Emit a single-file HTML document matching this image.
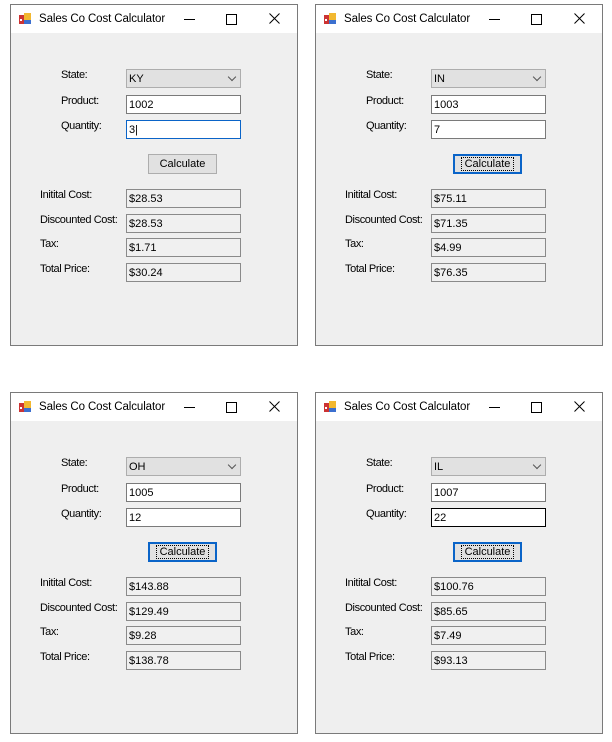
<!DOCTYPE html>
<html><head><style>
body{margin:0;width:612px;height:742px;background:#fff;position:relative;font-family:"Liberation Sans",Arial,sans-serif;overflow:hidden}
.w{position:absolute;width:286px;height:340px;border:1px solid #7a7a7a;background:#efefef}
.tb{position:absolute;left:0;top:0;width:286px;height:28px;background:#fff}
.tt{position:absolute;left:28px;top:8px;font-size:11.5px;color:#000;letter-spacing:-0.1px}
.ic{position:absolute;left:8px;top:8px;width:12px;height:12px}
.mn{position:absolute;left:173px;top:14px;width:11px;height:1px;background:#000}
.mx{position:absolute;left:215px;top:9px;width:9px;height:9px;border:1px solid #000}
.cl{position:absolute;left:258px;top:8px;width:11px;height:11px}
.l{position:absolute;font-size:11px;color:#000;letter-spacing:-0.4px}
.b{position:absolute;left:115px;width:113px;height:17px;border:1px solid #7a7a7a;font-size:11px;line-height:18px;box-sizing:content-box;text-indent:2px}
.o{background:#f0f0f0;border-color:#8a8a8a}
.t{background:#fff}
.c{background:#e1e1e1;border-color:#adadad}
.c:after{content:"";position:absolute;right:5px;top:4px;width:5px;height:5px;border-right:1px solid #555;border-bottom:1px solid #555;transform:rotate(45deg)}
.btn{position:absolute;left:137px;top:149px;width:67px;height:18px;background:#e1e1e1;border:1px solid #adadad;font-size:11px;text-align:center;line-height:18px}
.f{border:2px solid #0a64c8;width:65px;height:16px;line-height:16px}
.f span{outline:1px dotted #000;padding:0 3px}
</style></head><body>

<div class="w" style="left:10px;top:4px">
<div class="tb"><svg class="ic" viewBox="0 0 12 12"><rect x="0" y="2" width="5" height="9" fill="#c33"/><rect x="5" y="0" width="7" height="7" fill="#f2b830"/><rect x="5" y="7" width="7" height="4" fill="#3b6fcf"/><rect x="1" y="6" width="2" height="2" fill="#fff"/></svg><div class="tt">Sales Co Cost Calculator</div><div class="mn"></div><div class="mx"></div><svg class="cl" viewBox="0 0 11 11"><path d="M0.5 0.5L10.5 10.5M10.5 0.5L0.5 10.5" stroke="#000" stroke-width="1"/></svg></div>
<div class="l" style="left:50px;top:64px">State:</div>
<div class="l" style="left:50px;top:90px">Product:</div>
<div class="l" style="left:50px;top:115px">Quantity:</div>
<div class="b c" style="top:64px">KY</div>
<div class="b t" style="top:90px">1002</div>
<div class="b t" style="top:115px;border-color:#0a64c8">3|</div>
<div class="btn">Calculate</div>
<div class="l" style="left:29px;top:184px">Initital Cost:</div>
<div class="l" style="left:29px;top:209px">Discounted Cost:</div>
<div class="l" style="left:29px;top:233px">Tax:</div>
<div class="l" style="left:29px;top:258px">Total Price:</div>
<div class="b o" style="top:184px">$28.53</div>
<div class="b o" style="top:209px">$28.53</div>
<div class="b o" style="top:233px">$1.71</div>
<div class="b o" style="top:258px">$30.24</div>
</div>

<div class="w" style="left:315px;top:4px">
<div class="tb"><svg class="ic" viewBox="0 0 12 12"><rect x="0" y="2" width="5" height="9" fill="#c33"/><rect x="5" y="0" width="7" height="7" fill="#f2b830"/><rect x="5" y="7" width="7" height="4" fill="#3b6fcf"/><rect x="1" y="6" width="2" height="2" fill="#fff"/></svg><div class="tt">Sales Co Cost Calculator</div><div class="mn"></div><div class="mx"></div><svg class="cl" viewBox="0 0 11 11"><path d="M0.5 0.5L10.5 10.5M10.5 0.5L0.5 10.5" stroke="#000" stroke-width="1"/></svg></div>
<div class="l" style="left:50px;top:64px">State:</div>
<div class="l" style="left:50px;top:90px">Product:</div>
<div class="l" style="left:50px;top:115px">Quantity:</div>
<div class="b c" style="top:64px">IN</div>
<div class="b t" style="top:90px">1003</div>
<div class="b t" style="top:115px">7</div>
<div class="btn f"><span>Calculate</span></div>
<div class="l" style="left:29px;top:184px">Initital Cost:</div>
<div class="l" style="left:29px;top:209px">Discounted Cost:</div>
<div class="l" style="left:29px;top:233px">Tax:</div>
<div class="l" style="left:29px;top:258px">Total Price:</div>
<div class="b o" style="top:184px">$75.11</div>
<div class="b o" style="top:209px">$71.35</div>
<div class="b o" style="top:233px">$4.99</div>
<div class="b o" style="top:258px">$76.35</div>
</div>

<div class="w" style="left:10px;top:392px">
<div class="tb"><svg class="ic" viewBox="0 0 12 12"><rect x="0" y="2" width="5" height="9" fill="#c33"/><rect x="5" y="0" width="7" height="7" fill="#f2b830"/><rect x="5" y="7" width="7" height="4" fill="#3b6fcf"/><rect x="1" y="6" width="2" height="2" fill="#fff"/></svg><div class="tt">Sales Co Cost Calculator</div><div class="mn"></div><div class="mx"></div><svg class="cl" viewBox="0 0 11 11"><path d="M0.5 0.5L10.5 10.5M10.5 0.5L0.5 10.5" stroke="#000" stroke-width="1"/></svg></div>
<div class="l" style="left:50px;top:64px">State:</div>
<div class="l" style="left:50px;top:90px">Product:</div>
<div class="l" style="left:50px;top:115px">Quantity:</div>
<div class="b c" style="top:64px">OH</div>
<div class="b t" style="top:90px">1005</div>
<div class="b t" style="top:115px">12</div>
<div class="btn f"><span>Calculate</span></div>
<div class="l" style="left:29px;top:184px">Initital Cost:</div>
<div class="l" style="left:29px;top:209px">Discounted Cost:</div>
<div class="l" style="left:29px;top:233px">Tax:</div>
<div class="l" style="left:29px;top:258px">Total Price:</div>
<div class="b o" style="top:184px">$143.88</div>
<div class="b o" style="top:209px">$129.49</div>
<div class="b o" style="top:233px">$9.28</div>
<div class="b o" style="top:258px">$138.78</div>
</div>

<div class="w" style="left:315px;top:392px">
<div class="tb"><svg class="ic" viewBox="0 0 12 12"><rect x="0" y="2" width="5" height="9" fill="#c33"/><rect x="5" y="0" width="7" height="7" fill="#f2b830"/><rect x="5" y="7" width="7" height="4" fill="#3b6fcf"/><rect x="1" y="6" width="2" height="2" fill="#fff"/></svg><div class="tt">Sales Co Cost Calculator</div><div class="mn"></div><div class="mx"></div><svg class="cl" viewBox="0 0 11 11"><path d="M0.5 0.5L10.5 10.5M10.5 0.5L0.5 10.5" stroke="#000" stroke-width="1"/></svg></div>
<div class="l" style="left:50px;top:64px">State:</div>
<div class="l" style="left:50px;top:90px">Product:</div>
<div class="l" style="left:50px;top:115px">Quantity:</div>
<div class="b c" style="top:64px">IL</div>
<div class="b t" style="top:90px">1007</div>
<div class="b t" style="top:115px;border-color:#000">22</div>
<div class="btn f"><span>Calculate</span></div>
<div class="l" style="left:29px;top:184px">Initital Cost:</div>
<div class="l" style="left:29px;top:209px">Discounted Cost:</div>
<div class="l" style="left:29px;top:233px">Tax:</div>
<div class="l" style="left:29px;top:258px">Total Price:</div>
<div class="b o" style="top:184px">$100.76</div>
<div class="b o" style="top:209px">$85.65</div>
<div class="b o" style="top:233px">$7.49</div>
<div class="b o" style="top:258px">$93.13</div>
</div>

</body></html>
